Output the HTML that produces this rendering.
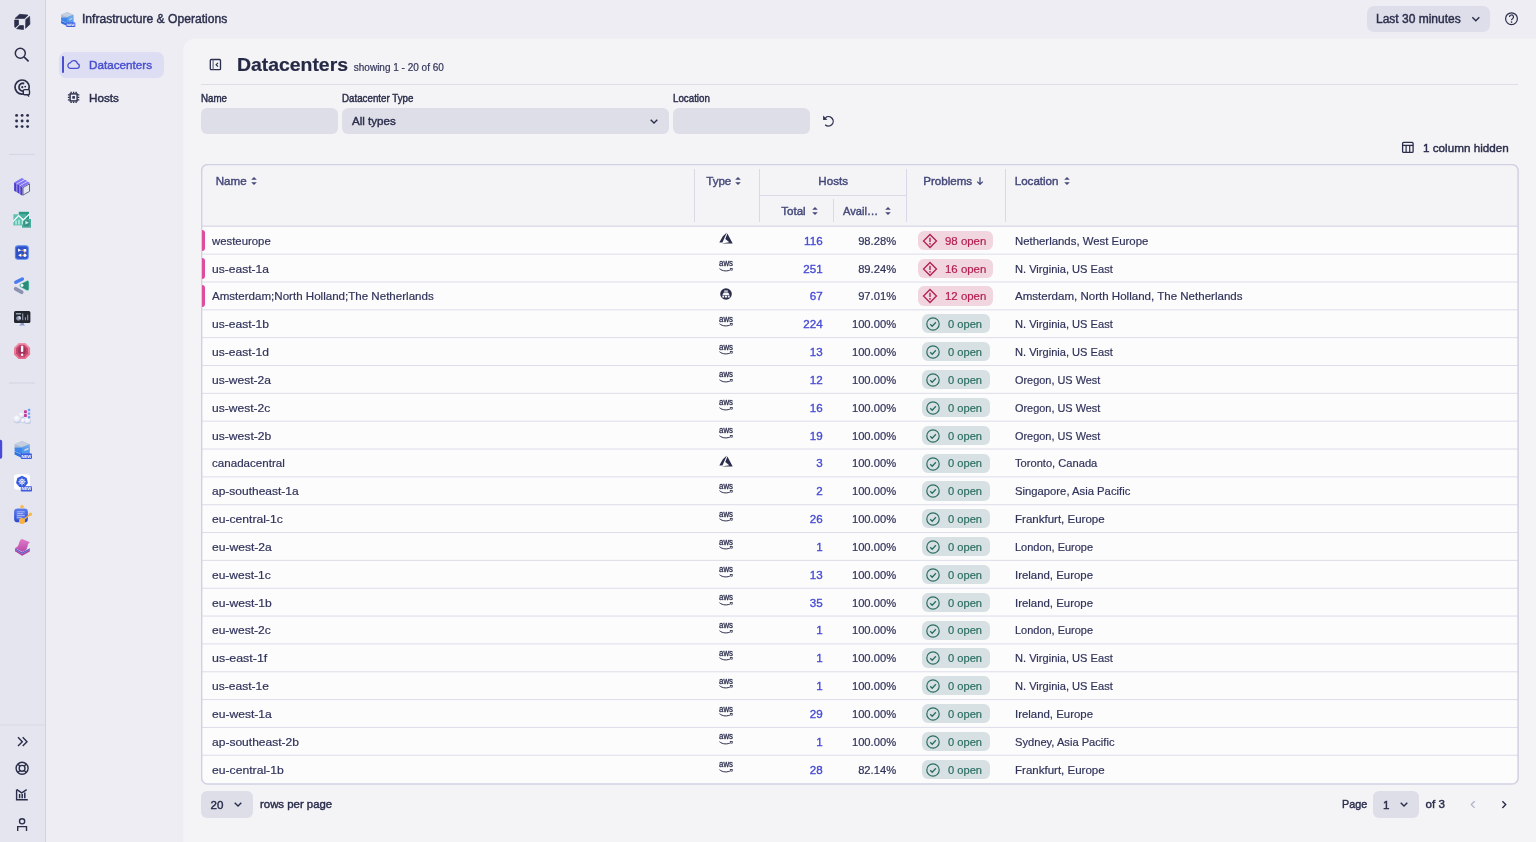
<!DOCTYPE html>
<html lang="en">
<head>
<meta charset="utf-8">
<title>Infrastructure &amp; Operations - Datacenters</title>
<style>
*{box-sizing:border-box;margin:0;padding:0}
html,body{width:1536px;height:842px;overflow:hidden}
#app{position:absolute;left:0;top:0;width:1536px;height:842px;will-change:transform}
body{background:#ededf3;-webkit-text-stroke:.2px currentColor;font-family:"Liberation Sans",sans-serif;font-size:12px;color:#2b2e4b;position:relative}
.abs{position:absolute}
/* rail */
#rail{position:absolute;left:0;top:0;width:46px;height:842px;background:#e4e5ef;border-right:1px solid #d1d2e1}
#rail .ic{position:absolute;left:10px;width:24px;height:24px}
#rail .div{position:absolute;left:9px;width:26px;height:1px;background:#d4d5e3}
#rail .act{position:absolute;left:0;top:441px;width:3px;height:21px;background:#4c4fd6;border-radius:0 3px 3px 0}
/* top bar */
#apptitle{position:absolute;left:82px;top:11px;font-size:12.1px;line-height:16px;white-space:nowrap}
#timebtn{position:absolute;left:1367px;top:6px;width:123px;height:26px;border-radius:7px;background:#dddee9}
#timebtn span{position:absolute;left:9px;top:5px;font-size:12px;line-height:16px;white-space:nowrap}
/* sidenav */
.nav{position:absolute;left:59px;width:105.2px;height:26.2px;border-radius:7px}
.nav span{position:absolute;left:29.6px;top:5.4px;line-height:16px;font-size:11.3px;white-space:nowrap;transform:scaleX(1.035);transform-origin:0 50%}
.nav.on{background:#dddef3;color:#4a4fd0}
.nav.on:before{content:"";position:absolute;left:3.1px;top:4.6px;width:2px;height:16.8px;background:#4a4fd0;border-radius:1px}
/* main */
#main{position:absolute;left:183px;top:38px;width:1353px;height:804px;background:#f4f4f7;border-radius:12px 0 0 0}
h1{position:absolute;left:237px;top:51.6px;font-size:18.4px;transform:scaleX(1.054);transform-origin:0 50%;line-height:26px;font-weight:700;white-space:nowrap;color:#262945}
#showing{position:absolute;left:353.8px;top:61.9px;color:#33365a;font-size:10px;line-height:12px;white-space:nowrap}
#hr{position:absolute;left:201px;top:84.3px;width:1317px;height:1px;background:#dcdde8}
.lbl{position:absolute;top:93.2px;font-size:10px;line-height:12px;white-space:nowrap}
.inp{position:absolute;top:108px;height:26px;border-radius:6px;background:#dddee8}
#hidden{position:absolute;left:1423px;top:140px;line-height:16px;font-size:11.7px;white-space:nowrap}
/* table */
#tbl{position:absolute;left:201px;top:164px;width:1318px;height:621px}
#tin{position:absolute;left:1.2px;top:.9px;width:1316px;height:619px}
.row{position:absolute;left:0;width:1316px;height:27.84px}
.c{position:absolute;white-space:nowrap;line-height:16px;font-size:11.55px;color:#30335a;transform-origin:0 50%}

.bar{position:absolute;left:-.4px;top:3px;width:3.7px;height:21.2px;background:#dc4d9f;border-radius:0 3px 3px 0}
.nm{left:10.3px;top:5.95px}
.tot{right:695.6px;top:5.95px;color:#474cd2;font-size:11.6px;-webkit-text-stroke:.35px #474cd2}
.av{right:622.1px;top:5.95px;font-size:11.2px}
.loc{left:812.6px;top:5.95px}
.ti{position:absolute;left:516px;top:4.5px}
.aws{position:absolute;left:516px;top:3px;width:16px;height:20px}
.aws em{position:absolute;left:-4px;width:24px;top:.5px;font-style:normal;font-weight:400;font-size:8.7px;line-height:11px;text-align:center;color:#2b2e4b;transform:scaleX(.9);-webkit-text-stroke:.3px #2b2e4b}
.aws svg{position:absolute;left:0;top:9.1px}
.bdg{position:absolute;top:4px;height:19.2px;border-radius:6px}
.bdg svg{position:absolute;top:2px}
.bdg b{position:absolute;top:1.9px;transform-origin:0 50%;line-height:16px;font-weight:400;font-size:11.6px;white-space:nowrap}
.bdg.r{left:716px;width:75px;background:#f1d6df;color:#b2204f}
.bdg.r svg{left:4px}.bdg.r b{left:26.5px;transform:scaleX(.985)}
.bdg.g{left:719.4px;width:68px;background:#d7e1e3;color:#2b6d61}
.bdg.g svg{left:3.5px}.bdg.g b{left:26.5px;transform:scaleX(.96)}
.th{position:absolute;white-space:nowrap;line-height:16px;font-size:11.6px;color:#45497a}
.vl{position:absolute;width:1px;background:#d9dae8}
#apptitle,.nav span,.lbl,#timebtn span,.th,#hidden,.inp span,.ft{-webkit-text-stroke:.42px currentColor}
.lbl{transform:scaleX(.975);transform-origin:0 50%}
</style>
</head>
<body>
<div id="app">
<svg width="0" height="0" style="position:absolute">
<defs>
<symbol id="i-sort" viewBox="0 0 10 12"><path d="M2.2 4.8 5 2l2.8 2.800z M2.2 7.2 5 10l2.8-2.800z" fill="#45497a"/></symbol>
<symbol id="i-down" viewBox="0 0 10 12"><path d="M5 2.300v7M2.200 6.600 5 9.400l2.800-2.800" fill="none" stroke="#45497a" stroke-width="1.300"/></symbol>
<symbol id="i-az" viewBox="0 0 16 14"><path d="M8.900 1.500 4.800 5.200 1.300 11.500h3.100z M9.400 2.400 7.300 8l4 3.200-7.500 1.300H14.700z" fill="#2b2e4b"/></symbol>
<symbol id="i-dc" viewBox="0 0 16 14"><circle cx="8" cy="7" r="5.800" fill="#2b2e4b"/><path d="M6.200 3.600h3.600v1.200H6.200z M4.300 8.200l1.500-2.600h4.400l1.500 2.600z M4.300 8.700h1.900v1.900H4.300z M7 8.700h2v1.900H7z M9.800 8.700h1.900v1.900H9.800z" fill="#f4f4fa"/></symbol>
<symbol id="i-crit" viewBox="0 0 16 16"><path d="M8 1.500 14.500 8 8 14.500 1.500 8z" fill="none" stroke="#b2204f" stroke-width="1.300" stroke-linejoin="miter"/><path d="M8 4.800v4.200" stroke="#b2204f" stroke-width="1.400"/><circle cx="8" cy="10.800" r=".9" fill="#b2204f"/></symbol>
<symbol id="i-ok" viewBox="0 0 16 16"><circle cx="8" cy="8" r="6.200" fill="none" stroke="#2b6d61" stroke-width="1.200"/><path d="M5.200 8.200 7.200 10.200 10.900 6.300" fill="none" stroke="#2b6d61" stroke-width="1.300"/></symbol>
<symbol id="i-chev" viewBox="0 0 12 12"><path d="M2.800 4.300 6 7.500l3.200-3.200" fill="none" stroke="#2b2e4b" stroke-width="1.500"/></symbol>
</defs>
</svg>

<div id="rail">
<svg class="abs" style="left:0;top:0" width="46" height="842" viewBox="0 0 46 842">
<defs>
<linearGradient id="gp" x1="0" y1="0" x2="1" y2="1"><stop offset="0" stop-color="#7a6cf0"/><stop offset="1" stop-color="#5340c8"/></linearGradient>
<linearGradient id="gt" x1="0" y1="0" x2="1" y2="1"><stop offset="0" stop-color="#5fc0b0"/><stop offset="1" stop-color="#1f8a7a"/></linearGradient>
<linearGradient id="gb" x1="0" y1="0" x2="0" y2="1"><stop offset="0" stop-color="#5b7cf0"/><stop offset="1" stop-color="#2f49c8"/></linearGradient>
<linearGradient id="gr" x1="0" y1="0" x2="0" y2="1"><stop offset="0" stop-color="#f092a8"/><stop offset="1" stop-color="#e46a88"/></linearGradient>
<linearGradient id="gs" x1="0" y1="0" x2="1" y2="1"><stop offset="0" stop-color="#8fc0f5"/><stop offset="1" stop-color="#2f6fe0"/></linearGradient>
<linearGradient id="gm" x1="0" y1="0" x2="0" y2="1"><stop offset="0" stop-color="#e07acb"/><stop offset="1" stop-color="#b84aa8"/></linearGradient>
<radialGradient id="gw" cx=".42" cy=".32" r=".75"><stop offset="0" stop-color="#ffffff"/><stop offset=".55" stop-color="#e6e9f5"/><stop offset="1" stop-color="#aab5d8"/></radialGradient>
</defs>
<!-- logo -->
<g fill="#2b2e4b" stroke="#2b2e4b" stroke-width=".7" stroke-linejoin="round">
<path d="M19.600 14.300 28 15.100 24.700 18.400H15.100z"/>
<path d="M25.800 19.500 29.600 16.400 29.900 24.300 25.600 28.300z"/>
<path d="M14.600 20h3.900v4.700L15.200 27.500l-.5-.6z"/>
<path d="M19.600 25.600h3.900v3.900L16.600 28.700z"/>
</g>
<!-- search -->
<circle cx="20.300" cy="53.200" r="5" fill="none" stroke="#2b2e4b" stroke-width="1.500"/>
<path d="M24 56.900 28.600 61.300" stroke="#2b2e4b" stroke-width="1.600"/>
<!-- copilot -->
<g fill="none" stroke="#2b2e4b">
<circle cx="22.100" cy="87.100" r="7.100" stroke-width="1.700"/>
<path d="M24.300 83.500a3.900 3.900 0 1 0 -1 7.500" stroke-width="1.700"/>
<rect x="23.300" y="89.600" width="6.200" height="5.200" rx="1.300" fill="#e4e5ef" stroke-width="1.400"/>
<path d="M27.600 95l1.500 1.500" stroke-width="1.300"/>
</g>
<circle cx="22.300" cy="87.200" r="1.100" fill="#2b2e4b"/><circle cx="25.200" cy="86.600" r=".95" fill="#2b2e4b"/><circle cx="23.200" cy="83.700" r=".7" fill="#2b2e4b"/>
<!-- grid -->
<g fill="#2b2e4b">
<circle cx="16.600" cy="115.400" r="1.450"/><circle cx="22.100" cy="115.400" r="1.450"/><circle cx="27.600" cy="115.400" r="1.450"/>
<circle cx="16.600" cy="121" r="1.450"/><circle cx="22.100" cy="121" r="1.450"/><circle cx="27.600" cy="121" r="1.450"/>
<circle cx="16.600" cy="126.600" r="1.450"/><circle cx="22.100" cy="126.600" r="1.450"/><circle cx="27.600" cy="126.600" r="1.450"/>
</g>
<rect x="9" y="153.900" width="26" height="1" fill="#d3d4e2"/>
<!-- 1 purple cube stack -->
<g>
<path d="M14.100 182.400 21.800 178 30 182.900v8.900L22.500 195.800 14.100 190.700z" fill="#ecebfa"/>
<path d="M14.100 182.400 21.800 178l2.500 1.300L16.600 183.800z" fill="#8174f6"/><path d="M14.100 182.400 16.600 183.800v8.500L14.100 190.700z" fill="#4b3cc9"/>
<path d="M17.200 184.100 24.900 179.700l2.400 1.300L19.600 185.500z" fill="#8174f6"/><path d="M17.200 184.100 19.600 185.500v8.500L17.200 192.500z" fill="#4b3cc9"/>
<path d="M20.200 185.800 27.700 181.500l2.300 1.400L22.500 187.200z" fill="#8174f6"/><path d="M20.200 185.800 22.500 187.200v8.600L20.200 194.400z" fill="#4b3cc9"/>
<path d="M23 187.600 29.500 183.900v7.500L23 195.100z" fill="#e4e5f0" stroke="#5a5980" stroke-width=".9"/>
</g>
<!-- 2 teal chart -->
<g>
<rect x="18.800" y="211.800" width="10.200" height="8" fill="#2b9886"/>
<rect x="13.400" y="214.300" width="12.600" height="11.100" fill="#5fbfb0"/>
<rect x="22" y="219" width="9" height="8.700" fill="#49a99a"/>
<path d="M18.800 214.300h7.200v4.700h-3.500z" fill="#3fa595" opacity=".6"/>
<path d="M15.300 220.500h1.500v4H15.300z M18.200 219.700h1.600v4.800h-1.600z M21.700 218.600h1.500v5.900h-1.500z" fill="#b5efe4"/>
<circle cx="26.400" cy="223.300" r="3.200" fill="#3a8f82"/>
<path d="M25.300 220.800 29 222.800 25.300 224.600z" fill="#c3f0e7"/>
<path d="M13 221.700 18.600 215.600 23.300 220 29.100 214.300" fill="none" stroke="#ffffff" stroke-width="1.200"/>
</g>
<!-- 3 blue square -->
<g>
<rect x="14.900" y="245.300" width="13.900" height="14.500" rx="3.200" fill="#5580ee"/>
<rect x="16" y="246.400" width="11.700" height="12.300" rx="2.300" fill="#2f50c6"/>
<path d="M18.100 248.500l3.200 1.650-3.200 1.650z" fill="#fff"/>
<rect x="23.500" y="248.900" width="2.800" height="2.900" rx=".5" fill="#fff"/>
<path d="M21.300 253.500v3.600l-3.200-1.800z" fill="#fff"/>
<circle cx="24.900" cy="255.300" r="1.600" fill="#fff"/>
<path d="M21.300 250.300h2.200M24.800 251.800v1.900M21.300 255.300h2" stroke="#f0a848" stroke-width=".9" fill="none"/>
</g>
<!-- 4 blue/teal/grey -->
<g>
<path d="M15.800 288.800 21.600 292.200" stroke="#56628c" stroke-width="3.800" stroke-linecap="round" opacity=".62"/>
<path d="M15.800 282.200 22.300 279" stroke="#4a7bf0" stroke-width="3.500" stroke-linecap="round"/>
<path d="M21.100 285.500 27.400 282.200v6.800z" fill="#5cc8b3" stroke="#5cc8b3" stroke-width="3.500" stroke-linejoin="round"/><path d="M21.100 285.500 27.400 282.200v6.800z" fill="#2c8a79" stroke="#2c8a79" stroke-width="2.200" stroke-linejoin="round"/>
<circle cx="22" cy="285.400" r="1.450" fill="#fff"/>
</g>
<!-- 5 monitor -->
<g>
<path d="M20.700 323h3l.6 2.200h-4.200z" fill="#8f9cc0"/>
<rect x="18.900" y="324.900" width="6.300" height="1.100" rx=".5" fill="#b3c2ea"/>
<rect x="14" y="311" width="16.400" height="12" rx="1.600" fill="#23262f"/>
<rect x="15.800" y="313" width="5.200" height="1.500" rx=".3" fill="#9aa1b2"/>
<circle cx="18.550" cy="318.300" r="2.400" fill="#8d95ad"/><path d="M18.550 318.300v-2.400a2.400 2.400 0 0 1 2.080 3.600z" fill="#cfd5e6"/>
<rect x="22.100" y="313.300" width="1.200" height="7" rx=".5" fill="#8b91a6"/>
<rect x="24.900" y="317" width="1.100" height="3.300" rx=".5" fill="#8b91a6"/>
<rect x="27.100" y="314.500" width="1.150" height="5.800" rx=".5" fill="#8b91a6"/>
</g>
<!-- 6 red octagon -->
<g>
<path d="M18.700 343h6.700l4.700 4.700v6.700l-4.700 4.700h-6.700l-4.700-4.700v-6.700z" fill="url(#gr)"/>
<path d="M19.500 344.800h5l3.500 3.500v5.300l-3.500 3.600h-5l-3.500-3.600v-5.300z" fill="#c84670"/>
<ellipse cx="22" cy="350.800" rx="4" ry="4.600" fill="#8f2a4c" opacity=".65"/>
<rect x="20.900" y="345.700" width="2.400" height="6.300" rx="1" fill="#fff"/><circle cx="22.100" cy="354.700" r="1.250" fill="#fff"/>
</g>
<rect x="9" y="382.500" width="26" height="1" fill="#d3d4e2"/>
<!-- 7 clouds -->
<g>
<circle cx="21.600" cy="415.200" r="2.900" fill="url(#gw)"/>
<circle cx="27.600" cy="420.900" r="3.200" fill="url(#gw)"/>
<circle cx="23" cy="420.900" r="2.300" fill="url(#gw)"/>
<circle cx="17.200" cy="419.300" r="4" fill="url(#gw)"/>
<rect x="24" y="410.300" width="2.900" height="2.900" rx=".8" fill="#c23c9c"/>
<rect x="24" y="414.100" width="2.900" height="2.900" rx=".8" fill="#c23c9c"/>
<rect x="27.800" y="408.800" width="2.500" height="2.400" rx=".7" fill="#6fa2f0"/>
<rect x="27.800" y="412.400" width="2.500" height="2.400" rx=".7" fill="#6fa2f0"/>
<rect x="27.800" y="416" width="2.500" height="2.400" rx=".7" fill="#6fa2f0"/>
</g>
<!-- active bar -->
<path d="M0 439.800h.4a1.800 1.800 0 0 1 1.800 1.800v15.400a1.800 1.800 0 0 1-1.800 1.800H0z" fill="#4a4ad8"/>
<!-- 8 servers NEW -->
<g>
<path d="M14.600 444.300 22 441l7.600 3.200v3.600H14.600z" fill="#aebbd2"/>
<path d="M14.600 444.300 22 441l7.600 3.200L22 447z" fill="#c5cfdf"/>
<path d="M14.600 447.600h15v3.600l-7.600 3.500-7.400-3.500z" fill="#3f86e8"/>
<path d="M14.600 451.600 22 455l7.600-3.500v3.200L22 458l-7.400-3.400z" fill="#2f70da"/>
<path d="M22 447v11l7.600-3.300v-10.500z" fill="#5aa0f0" opacity=".75"/>
<path d="M24.300 449.400l4.200-1.600v1.700l-4.200 1.600z" fill="#d0d8e8"/>
<rect x="20.800" y="453.600" width="11.200" height="5.300" rx=".8" fill="#3f5be0"/>
<text x="26.400" y="457.800" font-family="Liberation Sans, sans-serif" font-size="4.300" font-weight="700" fill="#ffffff" text-anchor="middle">NEW</text>
</g>
<!-- 9 k8s NEW -->
<g>
<rect x="14" y="474.200" width="16" height="15.600" rx="3.200" fill="#ffffff"/>
<path d="M22 475.800 26.700 478l1.200 5-3.200 4.100h-5.300L16.100 483l1.200-5z" fill="#3358e0"/>
<circle cx="22" cy="481.700" r="2.300" fill="none" stroke="#fff" stroke-width=".8"/>
<path d="M22 477.600v8.200M18 481.700h8M19.200 478.900l5.600 5.600M24.800 478.900l-5.600 5.600" stroke="#fff" stroke-width=".55"/>
<circle cx="22" cy="481.700" r=".8" fill="#fff"/>
<rect x="20.800" y="486.200" width="11.200" height="5.300" rx=".8" fill="#3f5be0"/>
<text x="26.400" y="490.400" font-family="Liberation Sans, sans-serif" font-size="4.300" font-weight="700" fill="#ffffff" text-anchor="middle">NEW</text>
</g>
<!-- 10 doc w/ orange -->
<g>
<rect x="14.100" y="508.500" width="13.800" height="13.800" rx="3.400" fill="url(#gb)"/>
<rect x="16.400" y="510.800" width="8.800" height="8.600" rx="1" fill="#5b78ea"/>
<path d="M16.800 511.800h7.800M16.800 513.600h6.400M16.800 515.500h7.800M16.800 517.400h5" stroke="#b9c6f6" stroke-width=".8"/>
<path d="M22 521 30.300 514.300" stroke="#f8ae3c" stroke-width="1.300"/>
<circle cx="22" cy="506.700" r="1.800" fill="#f9b84e"/>
<circle cx="30.400" cy="514.200" r="1.700" fill="#f9b84e"/>
<circle cx="22" cy="521" r="3" fill="#f9b040"/>
</g>
<!-- 11 book -->
<g>
<path d="M15 551.300 22.200 555.700 29.800 551.500v-1.800L22.200 554 15 549.600z" fill="#b23d9a"/>
<path d="M15 549.600 22.200 553.900 29.800 549.800v-1.700l-7.600 4.200-7.200-4.300z" fill="#5a5fd0"/>
<path d="M15 548 22.200 552.300 29.800 548.100v-1.500l-7.600 4.300-7.200-4.500z" fill="#eef0fb"/>
<path d="M14.600 548c2.500-.4 3.800-2 4.500-5 .5-2.200 1.200-3.600 3-4.100l7.900 3.300c-1.700.8-2.200 2.500-2.500 4.400-.5 2.700-1.700 4.700-5 5.300z" fill="url(#gm)"/>
</g>
<rect x="0" y="724.500" width="45" height="1" fill="#d9dae6"/>
<!-- bottom icons -->
<g fill="none" stroke="#2b2e4b" stroke-width="1.400">
<path d="M18 737.300 22.300 741.700 18 746.100M22.700 737.300 27 741.700 22.700 746.100"/>
<circle cx="22.100" cy="768.300" r="6"/><circle cx="22.100" cy="768.300" r="2.900"/>
<path d="M17.900 764.100l2.100 2.100M26.300 764.100l-2.100 2.100M17.900 772.500l2.100-2.100M26.300 772.500l-2.100-2.100"/>
<path d="M16.600 789.500v10.300h11.200"/>
<path d="M16.900 789.600 21.700 792.900 26.700 789.600"/>
<path d="M19.600 794v4.200M22.200 794v4.200M24.800 792.500v5.700" stroke-width="1.500"/>
<circle cx="22.100" cy="821.300" r="2.600"/>
<path d="M17.700 831v-4.400h8.800v4.400"/>
</g>
</svg>

</div>
<div id="apptitle">Infrastructure &amp; Operations</div>
<div id="timebtn"><span>Last 30 minutes</span></div>
<div class="nav on" style="top:51.6px"><span>Datacenters</span></div>
<div class="nav" style="top:84.6px"><span>Hosts</span></div>
<svg class="abs" style="left:170px;top:30px" width="1366" height="812" viewBox="170 30 1366 812"><path d="M183.300 842V50.600a12 12 0 0 1 12-12H1536V842z" fill="#f4f4f7"/></svg>
<h1>Datacenters</h1>
<div id="showing">showing 1 - 20 of 60</div>
<div id="hr"></div>
<div class="lbl" style="left:201px">Name</div>
<div class="lbl" style="left:342px">Datacenter Type</div>
<div class="lbl" style="left:673px">Location</div>
<div class="inp" style="left:201px;width:137px"></div>
<div class="inp" style="left:342px;width:327px"><span class="abs" style="left:10px;top:5.3px;line-height:16px;font-size:11.6px">All types</span></div>
<div class="inp" style="left:673px;width:137px"></div>
<div id="hidden">1 column hidden</div>
<div id="tbl">
<svg class="abs" style="left:0;top:0" width="1318" height="621" viewBox="0 0 1318 621"><path d="M.65 62.30H1317.100V614a6 6 0 0 1-6 6H6.650a6 6 0 0 1-6-6z" fill="#fcfcfd"/><rect x=".65" y="61.50" width="1316.450" height="1.500" fill="#dcdde9"/><rect x=".65" y="89.64" width="1316.450" height="1" fill="#dcdde9"/><rect x=".65" y="117.48" width="1316.450" height="1" fill="#dcdde9"/><rect x=".65" y="145.32" width="1316.450" height="1" fill="#dcdde9"/><rect x=".65" y="173.16" width="1316.450" height="1" fill="#dcdde9"/><rect x=".65" y="201.00" width="1316.450" height="1" fill="#dcdde9"/><rect x=".65" y="228.84" width="1316.450" height="1" fill="#dcdde9"/><rect x=".65" y="256.68" width="1316.450" height="1" fill="#dcdde9"/><rect x=".65" y="284.52" width="1316.450" height="1" fill="#dcdde9"/><rect x=".65" y="312.36" width="1316.450" height="1" fill="#dcdde9"/><rect x=".65" y="340.20" width="1316.450" height="1" fill="#dcdde9"/><rect x=".65" y="368.04" width="1316.450" height="1" fill="#dcdde9"/><rect x=".65" y="395.88" width="1316.450" height="1" fill="#dcdde9"/><rect x=".65" y="423.72" width="1316.450" height="1" fill="#dcdde9"/><rect x=".65" y="451.56" width="1316.450" height="1" fill="#dcdde9"/><rect x=".65" y="479.40" width="1316.450" height="1" fill="#dcdde9"/><rect x=".65" y="507.24" width="1316.450" height="1" fill="#dcdde9"/><rect x=".65" y="535.08" width="1316.450" height="1" fill="#dcdde9"/><rect x=".65" y="562.92" width="1316.450" height="1" fill="#dcdde9"/><rect x=".65" y="590.76" width="1316.450" height="1" fill="#dcdde9"/><rect x=".65" y=".55" width="1316.450" height="619.450" rx="6" fill="none" stroke="#d0d1e2" stroke-width="1.500"/></svg>
<div id="tin">
<div class="th" style="left:13.5px;top:7.7px">Name</div><svg class="abs" style="left:46.5px;top:10.2px" width="10" height="12" viewBox="0 0 10 12"><use href="#i-sort"/></svg>
<div class="th" style="left:504px;top:7.7px">Type</div><svg class="abs" style="left:531px;top:10.2px" width="10" height="12" viewBox="0 0 10 12"><use href="#i-sort"/></svg>
<div class="th" style="left:557px;width:148px;text-align:center;top:7.7px">Hosts</div>
<div class="th" style="left:579px;top:37.7px">Total</div><svg class="abs" style="left:607.5px;top:40.2px" width="10" height="12" viewBox="0 0 10 12"><use href="#i-sort"/></svg>
<div class="th" style="left:641px;top:37.7px;transform:scaleX(.96);transform-origin:0 50%">Avail…</div><svg class="abs" style="left:681px;top:40.2px" width="10" height="12" viewBox="0 0 10 12"><use href="#i-sort"/></svg>
<div class="th" style="left:721px;top:7.7px">Problems</div><svg class="abs" style="left:773px;top:10.2px" width="10" height="12" viewBox="0 0 10 12"><use href="#i-down"/></svg>
<div class="th" style="left:812.5px;top:7.7px">Location</div><svg class="abs" style="left:860px;top:10.2px" width="10" height="12" viewBox="0 0 10 12"><use href="#i-sort"/></svg>
<i class="vl" style="left:491.5px;top:4px;height:53px"></i>
<i class="vl" style="left:557px;top:4px;height:53px"></i>
<i class="vl" style="left:631px;top:34px;height:23px"></i>
<i class="vl" style="left:704px;top:4px;height:53px"></i>
<i class="vl" style="left:803px;top:4px;height:53px"></i>
<i class="abs" style="left:557px;top:30.5px;width:148px;height:1px;background:#d9dae8"></i>

<div class="row" style="top:61.90px"><i class="bar"></i><span class="c nm" style="transform:scaleX(0.9832)">westeurope</span><svg class="ti" width="16" height="14" viewBox="0 0 16 14"><use href="#i-az"/></svg><span class="c tot">116</span><span class="c av">98.28%</span><span class="bdg r"><svg width="16" height="16" viewBox="0 0 16 16"><use href="#i-crit"/></svg><b>98 open</b></span><span class="c loc" style="transform:scaleX(0.9858)">Netherlands, West Europe</span></div>
<div class="row" style="top:89.74px"><i class="bar"></i><span class="c nm" style="transform:scaleX(1.0447)">us-east-1a</span><span class="aws"><em>aws</em><svg width="16" height="8" viewBox="0 0 16 8"><path d="M1.500 1.700C4.500 4.400 9.500 4.500 13 2.600" fill="none" stroke="#2b2e4b" stroke-width="1"/><path d="M11.900 1.500l2.600.1-.8 2.300" fill="none" stroke="#2b2e4b" stroke-width=".9"/></svg></span><span class="c tot">251</span><span class="c av">89.24%</span><span class="bdg r"><svg width="16" height="16" viewBox="0 0 16 16"><use href="#i-crit"/></svg><b>16 open</b></span><span class="c loc" style="transform:scaleX(0.9604)">N. Virginia, US East</span></div>
<div class="row" style="top:117.58px"><i class="bar"></i><span class="c nm" style="transform:scaleX(1.0013)">Amsterdam;North Holland;The Netherlands</span><svg class="ti" width="16" height="14" viewBox="0 0 16 14"><use href="#i-dc"/></svg><span class="c tot">67</span><span class="c av">97.01%</span><span class="bdg r"><svg width="16" height="16" viewBox="0 0 16 16"><use href="#i-crit"/></svg><b>12 open</b></span><span class="c loc" style="transform:scaleX(0.9995)">Amsterdam, North Holland, The Netherlands</span></div>
<div class="row" style="top:145.42px"><span class="c nm" style="transform:scaleX(1.0447)">us-east-1b</span><span class="aws"><em>aws</em><svg width="16" height="8" viewBox="0 0 16 8"><path d="M1.500 1.700C4.500 4.400 9.500 4.500 13 2.600" fill="none" stroke="#2b2e4b" stroke-width="1"/><path d="M11.900 1.500l2.600.1-.8 2.300" fill="none" stroke="#2b2e4b" stroke-width=".9"/></svg></span><span class="c tot">224</span><span class="c av">100.00%</span><span class="bdg g"><svg width="16" height="16" viewBox="0 0 16 16"><use href="#i-ok"/></svg><b>0 open</b></span><span class="c loc" style="transform:scaleX(0.9604)">N. Virginia, US East</span></div>
<div class="row" style="top:173.26px"><span class="c nm" style="transform:scaleX(1.0447)">us-east-1d</span><span class="aws"><em>aws</em><svg width="16" height="8" viewBox="0 0 16 8"><path d="M1.500 1.700C4.500 4.400 9.500 4.500 13 2.600" fill="none" stroke="#2b2e4b" stroke-width="1"/><path d="M11.900 1.500l2.600.1-.8 2.300" fill="none" stroke="#2b2e4b" stroke-width=".9"/></svg></span><span class="c tot">13</span><span class="c av">100.00%</span><span class="bdg g"><svg width="16" height="16" viewBox="0 0 16 16"><use href="#i-ok"/></svg><b>0 open</b></span><span class="c loc" style="transform:scaleX(0.9604)">N. Virginia, US East</span></div>
<div class="row" style="top:201.10px"><span class="c nm" style="transform:scaleX(1.0445)">us-west-2a</span><span class="aws"><em>aws</em><svg width="16" height="8" viewBox="0 0 16 8"><path d="M1.500 1.700C4.500 4.400 9.500 4.500 13 2.600" fill="none" stroke="#2b2e4b" stroke-width="1"/><path d="M11.900 1.500l2.600.1-.8 2.300" fill="none" stroke="#2b2e4b" stroke-width=".9"/></svg></span><span class="c tot">12</span><span class="c av">100.00%</span><span class="bdg g"><svg width="16" height="16" viewBox="0 0 16 16"><use href="#i-ok"/></svg><b>0 open</b></span><span class="c loc" style="transform:scaleX(0.9448)">Oregon, US West</span></div>
<div class="row" style="top:228.94px"><span class="c nm" style="transform:scaleX(1.0443)">us-west-2c</span><span class="aws"><em>aws</em><svg width="16" height="8" viewBox="0 0 16 8"><path d="M1.500 1.700C4.500 4.400 9.500 4.500 13 2.600" fill="none" stroke="#2b2e4b" stroke-width="1"/><path d="M11.900 1.500l2.600.1-.8 2.300" fill="none" stroke="#2b2e4b" stroke-width=".9"/></svg></span><span class="c tot">16</span><span class="c av">100.00%</span><span class="bdg g"><svg width="16" height="16" viewBox="0 0 16 16"><use href="#i-ok"/></svg><b>0 open</b></span><span class="c loc" style="transform:scaleX(0.9448)">Oregon, US West</span></div>
<div class="row" style="top:256.78px"><span class="c nm" style="transform:scaleX(1.0498)">us-west-2b</span><span class="aws"><em>aws</em><svg width="16" height="8" viewBox="0 0 16 8"><path d="M1.500 1.700C4.500 4.400 9.500 4.500 13 2.600" fill="none" stroke="#2b2e4b" stroke-width="1"/><path d="M11.900 1.500l2.600.1-.8 2.300" fill="none" stroke="#2b2e4b" stroke-width=".9"/></svg></span><span class="c tot">19</span><span class="c av">100.00%</span><span class="bdg g"><svg width="16" height="16" viewBox="0 0 16 16"><use href="#i-ok"/></svg><b>0 open</b></span><span class="c loc" style="transform:scaleX(0.9448)">Oregon, US West</span></div>
<div class="row" style="top:284.62px"><span class="c nm" style="transform:scaleX(1.0035)">canadacentral</span><svg class="ti" width="16" height="14" viewBox="0 0 16 14"><use href="#i-az"/></svg><span class="c tot">3</span><span class="c av">100.00%</span><span class="bdg g"><svg width="16" height="16" viewBox="0 0 16 16"><use href="#i-ok"/></svg><b>0 open</b></span><span class="c loc" style="transform:scaleX(0.9638)">Toronto, Canada</span></div>
<div class="row" style="top:312.46px"><span class="c nm" style="transform:scaleX(1.0389)">ap-southeast-1a</span><span class="aws"><em>aws</em><svg width="16" height="8" viewBox="0 0 16 8"><path d="M1.500 1.700C4.500 4.400 9.500 4.500 13 2.600" fill="none" stroke="#2b2e4b" stroke-width="1"/><path d="M11.900 1.500l2.600.1-.8 2.300" fill="none" stroke="#2b2e4b" stroke-width=".9"/></svg></span><span class="c tot">2</span><span class="c av">100.00%</span><span class="bdg g"><svg width="16" height="16" viewBox="0 0 16 16"><use href="#i-ok"/></svg><b>0 open</b></span><span class="c loc" style="transform:scaleX(0.9762)">Singapore, Asia Pacific</span></div>
<div class="row" style="top:340.30px"><span class="c nm" style="transform:scaleX(1.0491)">eu-central-1c</span><span class="aws"><em>aws</em><svg width="16" height="8" viewBox="0 0 16 8"><path d="M1.500 1.700C4.500 4.400 9.500 4.500 13 2.600" fill="none" stroke="#2b2e4b" stroke-width="1"/><path d="M11.900 1.500l2.600.1-.8 2.300" fill="none" stroke="#2b2e4b" stroke-width=".9"/></svg></span><span class="c tot">26</span><span class="c av">100.00%</span><span class="bdg g"><svg width="16" height="16" viewBox="0 0 16 16"><use href="#i-ok"/></svg><b>0 open</b></span><span class="c loc" style="transform:scaleX(0.9982)">Frankfurt, Europe</span></div>
<div class="row" style="top:368.14px"><span class="c nm" style="transform:scaleX(1.0468)">eu-west-2a</span><span class="aws"><em>aws</em><svg width="16" height="8" viewBox="0 0 16 8"><path d="M1.500 1.700C4.500 4.400 9.500 4.500 13 2.600" fill="none" stroke="#2b2e4b" stroke-width="1"/><path d="M11.900 1.500l2.600.1-.8 2.300" fill="none" stroke="#2b2e4b" stroke-width=".9"/></svg></span><span class="c tot">1</span><span class="c av">100.00%</span><span class="bdg g"><svg width="16" height="16" viewBox="0 0 16 16"><use href="#i-ok"/></svg><b>0 open</b></span><span class="c loc" style="transform:scaleX(0.9490)">London, Europe</span></div>
<div class="row" style="top:395.98px"><span class="c nm" style="transform:scaleX(1.0392)">eu-west-1c</span><span class="aws"><em>aws</em><svg width="16" height="8" viewBox="0 0 16 8"><path d="M1.500 1.700C4.500 4.400 9.500 4.500 13 2.600" fill="none" stroke="#2b2e4b" stroke-width="1"/><path d="M11.900 1.500l2.600.1-.8 2.300" fill="none" stroke="#2b2e4b" stroke-width=".9"/></svg></span><span class="c tot">13</span><span class="c av">100.00%</span><span class="bdg g"><svg width="16" height="16" viewBox="0 0 16 16"><use href="#i-ok"/></svg><b>0 open</b></span><span class="c loc" style="transform:scaleX(0.9877)">Ireland, Europe</span></div>
<div class="row" style="top:423.82px"><span class="c nm" style="transform:scaleX(1.0468)">eu-west-1b</span><span class="aws"><em>aws</em><svg width="16" height="8" viewBox="0 0 16 8"><path d="M1.500 1.700C4.500 4.400 9.500 4.500 13 2.600" fill="none" stroke="#2b2e4b" stroke-width="1"/><path d="M11.900 1.500l2.600.1-.8 2.300" fill="none" stroke="#2b2e4b" stroke-width=".9"/></svg></span><span class="c tot">35</span><span class="c av">100.00%</span><span class="bdg g"><svg width="16" height="16" viewBox="0 0 16 16"><use href="#i-ok"/></svg><b>0 open</b></span><span class="c loc" style="transform:scaleX(0.9877)">Ireland, Europe</span></div>
<div class="row" style="top:451.66px"><span class="c nm" style="transform:scaleX(1.0392)">eu-west-2c</span><span class="aws"><em>aws</em><svg width="16" height="8" viewBox="0 0 16 8"><path d="M1.500 1.700C4.500 4.400 9.500 4.500 13 2.600" fill="none" stroke="#2b2e4b" stroke-width="1"/><path d="M11.900 1.500l2.600.1-.8 2.300" fill="none" stroke="#2b2e4b" stroke-width=".9"/></svg></span><span class="c tot">1</span><span class="c av">100.00%</span><span class="bdg g"><svg width="16" height="16" viewBox="0 0 16 16"><use href="#i-ok"/></svg><b>0 open</b></span><span class="c loc" style="transform:scaleX(0.9490)">London, Europe</span></div>
<div class="row" style="top:479.50px"><span class="c nm" style="transform:scaleX(1.0771)">us-east-1f</span><span class="aws"><em>aws</em><svg width="16" height="8" viewBox="0 0 16 8"><path d="M1.500 1.700C4.500 4.400 9.500 4.500 13 2.600" fill="none" stroke="#2b2e4b" stroke-width="1"/><path d="M11.900 1.500l2.600.1-.8 2.300" fill="none" stroke="#2b2e4b" stroke-width=".9"/></svg></span><span class="c tot">1</span><span class="c av">100.00%</span><span class="bdg g"><svg width="16" height="16" viewBox="0 0 16 16"><use href="#i-ok"/></svg><b>0 open</b></span><span class="c loc" style="transform:scaleX(0.9604)">N. Virginia, US East</span></div>
<div class="row" style="top:507.34px"><span class="c nm" style="transform:scaleX(1.0447)">us-east-1e</span><span class="aws"><em>aws</em><svg width="16" height="8" viewBox="0 0 16 8"><path d="M1.500 1.700C4.500 4.400 9.500 4.500 13 2.600" fill="none" stroke="#2b2e4b" stroke-width="1"/><path d="M11.900 1.500l2.600.1-.8 2.300" fill="none" stroke="#2b2e4b" stroke-width=".9"/></svg></span><span class="c tot">1</span><span class="c av">100.00%</span><span class="bdg g"><svg width="16" height="16" viewBox="0 0 16 16"><use href="#i-ok"/></svg><b>0 open</b></span><span class="c loc" style="transform:scaleX(0.9604)">N. Virginia, US East</span></div>
<div class="row" style="top:535.18px"><span class="c nm" style="transform:scaleX(1.0468)">eu-west-1a</span><span class="aws"><em>aws</em><svg width="16" height="8" viewBox="0 0 16 8"><path d="M1.500 1.700C4.500 4.400 9.500 4.500 13 2.600" fill="none" stroke="#2b2e4b" stroke-width="1"/><path d="M11.900 1.500l2.600.1-.8 2.300" fill="none" stroke="#2b2e4b" stroke-width=".9"/></svg></span><span class="c tot">29</span><span class="c av">100.00%</span><span class="bdg g"><svg width="16" height="16" viewBox="0 0 16 16"><use href="#i-ok"/></svg><b>0 open</b></span><span class="c loc" style="transform:scaleX(0.9877)">Ireland, Europe</span></div>
<div class="row" style="top:563.02px"><span class="c nm" style="transform:scaleX(1.0425)">ap-southeast-2b</span><span class="aws"><em>aws</em><svg width="16" height="8" viewBox="0 0 16 8"><path d="M1.500 1.700C4.500 4.400 9.500 4.500 13 2.600" fill="none" stroke="#2b2e4b" stroke-width="1"/><path d="M11.900 1.500l2.600.1-.8 2.300" fill="none" stroke="#2b2e4b" stroke-width=".9"/></svg></span><span class="c tot">1</span><span class="c av">100.00%</span><span class="bdg g"><svg width="16" height="16" viewBox="0 0 16 16"><use href="#i-ok"/></svg><b>0 open</b></span><span class="c loc" style="transform:scaleX(0.9648)">Sydney, Asia Pacific</span></div>
<div class="row" style="top:590.86px"><span class="c nm" style="transform:scaleX(1.0537)">eu-central-1b</span><span class="aws"><em>aws</em><svg width="16" height="8" viewBox="0 0 16 8"><path d="M1.500 1.700C4.500 4.400 9.500 4.500 13 2.600" fill="none" stroke="#2b2e4b" stroke-width="1"/><path d="M11.900 1.500l2.600.1-.8 2.300" fill="none" stroke="#2b2e4b" stroke-width=".9"/></svg></span><span class="c tot">28</span><span class="c av">82.14%</span><span class="bdg g"><svg width="16" height="16" viewBox="0 0 16 16"><use href="#i-ok"/></svg><b>0 open</b></span><span class="c loc" style="transform:scaleX(0.9982)">Frankfurt, Europe</span></div>
</div>
</div>
<div class="inp" style="left:201px;top:791px;width:52px;height:26.500px"><span class="abs" style="left:9.500px;top:5.500px;line-height:16px;font-size:11.600px">20</span></div>
<div class="abs ft" style="left:260px;top:796px;line-height:16px;font-size:11.400px;white-space:nowrap">rows per page</div>
<div class="abs ft" style="left:1341.500px;top:796px;line-height:16px;font-size:11.600px;white-space:nowrap;transform:scaleX(.93);transform-origin:0 50%">Page</div>
<div class="inp" style="left:1373px;top:791px;width:46px;height:26.500px"><span class="abs" style="left:10px;top:5.500px;line-height:16px;font-size:11.600px">1</span></div>
<div class="abs ft" style="left:1425.500px;top:796px;line-height:16px;font-size:11.600px;white-space:nowrap">of 3</div>
<svg class="abs" style="left:190px;top:786px;pointer-events:none" width="1346" height="40" viewBox="190 786 1346 40">
<path d="M234.700 802.700 238 806 241.300 802.700" fill="none" stroke="#2b2e4b" stroke-width="1.400"/>
<path d="M1400.700 802.700 1404 806 1407.300 802.700" fill="none" stroke="#2b2e4b" stroke-width="1.400"/>
<path d="M1474.600 801.300 1471.300 804.600 1474.600 807.900" fill="none" stroke="#b0b2c8" stroke-width="1.300"/>
<path d="M1502.400 801.300 1505.700 804.600 1502.400 807.900" fill="none" stroke="#2b2e4b" stroke-width="1.400"/>
</svg>

<svg class="abs" style="left:0;top:0;pointer-events:none" width="1536" height="170" viewBox="0 0 1536 170">
<!-- small app icon -->
<g transform="translate(49.100 -349.500) scale(.82)">
<path d="M14.600 444.300 22 441l7.600 3.200v3.600H14.600z" fill="#aebbd2"/>
<path d="M14.600 444.300 22 441l7.600 3.200L22 447z" fill="#c5cfdf"/>
<path d="M14.600 447.600h15v3.600l-7.600 3.500-7.400-3.500z" fill="#3f86e8"/>
<path d="M14.600 451.600 22 455l7.600-3.500v3.200L22 458l-7.400-3.400z" fill="#2f70da"/>
<path d="M22 447v11l7.600-3.300v-10.500z" fill="#5aa0f0" opacity=".75"/>
<path d="M24.300 449.400l4.200-1.600v1.700l-4.200 1.600z" fill="#d0d8e8"/>
<rect x="20.800" y="453.600" width="11.200" height="5.300" rx=".8" fill="#3f5be0"/>
<text x="26.400" y="457.800" font-family="Liberation Sans, sans-serif" font-size="4.300" font-weight="700" fill="#ffffff" text-anchor="middle">NEW</text>
</g>
<!-- time chevron -->
<path d="M1472.300 17.300 1475.800 20.800 1479.300 17.300" fill="none" stroke="#2b2e4b" stroke-width="1.400"/>
<!-- help -->
<circle cx="1511.500" cy="18.700" r="5.900" fill="none" stroke="#2b2e4b" stroke-width="1.200"/>
<path d="M1509.500 17a2 2 0 1 1 3 1.700c-.7.400-1 .8-1 1.600" fill="none" stroke="#2b2e4b" stroke-width="1.200"/>
<circle cx="1511.500" cy="22.100" r=".8" fill="#2b2e4b"/>
<!-- cloud (active) -->
<path d="M70 68.300h7a2.400 2.400 0 0 0 .4-4.750 3.650 3.400 0 0 0-7-.75 2.800 2.800 0 0 0-.4 5.500z" fill="none" stroke="#4a4fd0" stroke-width="1.250" stroke-linejoin="round"/>
<!-- chip -->
<g stroke="#2b2e4b" fill="none">
<rect x="70.100" y="93.900" width="7" height="7" stroke-width="1.400"/>
<rect x="72.300" y="96.100" width="2.600" height="2.600" fill="#2b2e4b" stroke="none"/>
<path d="M71.100 91.700v1.700M73.600 91.700v1.700M76.100 91.700v1.700M71.100 101.400v1.700M73.600 101.400v1.700M76.100 101.400v1.700M67.900 94.900h1.700M67.900 97.400h1.700M67.900 99.900h1.700M77.600 94.900h1.700M77.600 97.400h1.700M77.600 99.900h1.700" stroke-width="1.350"/>
</g>
<!-- sidebar toggle -->
<rect x="210.300" y="59.500" width="10.200" height="10.200" rx="1" fill="none" stroke="#2b2e4b" stroke-width="1.300"/>
<path d="M213.100 59.500v10.200" stroke="#5a5d7c" stroke-width="1.100"/>
<path d="M218 62.800 216.100 64.700 218 66.600" fill="none" stroke="#2b2e4b" stroke-width="1.200"/>
<!-- select chevron -->
<path d="M650.700 119.700 654 123 657.300 119.700" fill="none" stroke="#2b2e4b" stroke-width="1.400"/>
<!-- reset -->
<path d="M825.200 124.700a4.700 4.700 0 1 0 .3-7" fill="none" stroke="#2b2e4b" stroke-width="1.300"/>
<path d="M823.100 115.500v4.500l4.300-.2z" fill="#2b2e4b"/>
<!-- table columns icon -->
<rect x="1402.600" y="142.400" width="10.500" height="10" rx="1" fill="none" stroke="#2b2e4b" stroke-width="1.300"/>
<path d="M1402.600 145.400h10.500" stroke="#2b2e4b" stroke-width="1.300"/>
<path d="M1406.100 145.400v7M1409.700 145.400v7" stroke="#2b2e4b" stroke-width="1.200"/>
</svg>

</div>
</body>
</html>
